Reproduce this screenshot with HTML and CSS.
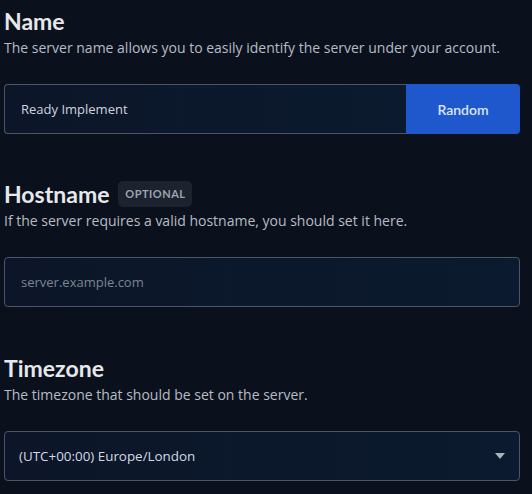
FILE: index.html
```html
<!DOCTYPE html>
<html lang="en">
<head>
<meta charset="utf-8">
<title>Server settings</title>
<link rel="stylesheet" href="styles.css">
</head>
<body>
<main class="form">
  <section class="field">
    <h2 class="label">Name</h2>
    <p class="hint">The server name allows you to easily identify the server under your account.</p>
    <div class="input-group">
      <div class="control grow">Ready Implement</div>
      <button class="btn-random" type="button">Random</button>
    </div>
  </section>
  <section class="field">
    <h2 class="label">Hostname <span class="badge">Optional</span></h2>
    <p class="hint">If the server requires a valid hostname, you should set it here.</p>
    <div class="control placeholder">server.example.com</div>
  </section>
  <section class="field">
    <h2 class="label">Timezone</h2>
    <p class="hint">The timezone that should be set on the server.</p>
    <div class="control select">
      <span>(UTC+00:00) Europe/London</span>
      <svg class="caret" width="10" height="6" viewBox="0 0 10 6"><path d="M0 0h10L5 6z" fill="#a9b1bd"/></svg>
    </div>
  </section>
</main>
</body>
</html>
```
FILE: styles.css
```css
html, body {
  margin: 0;
  padding: 0;
  background: #0b111c;
}
body {
  font-family: "Open Sans", "Noto Sans", sans-serif;
  color: #b9bfc9;
}
.form {
  width: 516px;
  padding: 2px 0 0 4px;
  display: flex;
  flex-direction: column;
  gap: 41px;
}
.field {
  display: flex;
  flex-direction: column;
}
.field:last-child {
  margin-top: 1px;
}
.label {
  margin: 0;
  font-family: "Lato", sans-serif;
  font-weight: 700;
  font-size: 23px;
  line-height: 26px;
  height: 26px;
  margin-top: 6px;
  color: #e6e8ec;
  display: flex;
  align-items: center;
  gap: 9px;
}
.badge {
  font-family: "Lato", sans-serif;
  font-size: 11px;
  font-weight: 700;
  text-transform: uppercase;
  letter-spacing: 0.5px;
  color: #9aa3b1;
  background: #1d232e;
  border-radius: 5px;
  height: 26px;
  width: 74px;
  display: inline-flex;
  align-items: center;
  justify-content: center;
  box-sizing: border-box;
}
.hint {
  margin: 4px 0 0 0;
  font-size: 14px;
  line-height: 20px;
  color: #b6bcc6;
}
.input-group {
  display: flex;
  margin-top: 26px;
}
.control {
  height: 50px;
  box-sizing: border-box;
  border: 1px solid #4b5565;
  border-radius: 4px;
  background: linear-gradient(90deg, #0c1628, #0b1a2e);
  display: flex;
  align-items: center;
  padding: 0 16px;
  font-size: 13px;
  color: #cfd5de;
}
.field > .control {
  margin-top: 26px;
}
.grow {
  flex: 1;
  border-radius: 4px 0 0 4px;
  border-right: none;
}
.placeholder {
  color: #7c8593;
}
.select {
  justify-content: space-between;
  padding: 0 14px 0 14px;
  font-size: 13.4px;
  color: #d4d9e1;
}
.caret {
  display: block;
}
.btn-random {
  width: 114px;
  height: 50px;
  border: none;
  border-radius: 0 4px 4px 0;
  background: #1f58cc;
  color: #dce6fa;
  font-family: "Lato", sans-serif;
  font-size: 14px;
  font-weight: 600;
  padding: 0;
}
```
